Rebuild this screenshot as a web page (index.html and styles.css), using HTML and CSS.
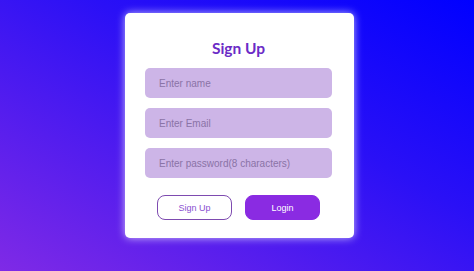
FILE: index.html
```html
<!DOCTYPE html>
<html>
<head>
<meta charset="utf-8">
<link rel="stylesheet" href="styles.css">
</head>
<body>
<div class="page">
  <form class="card">
    <h1 class="title">Sign Up</h1>
    <div class="fields">
      <input class="field" type="text" placeholder="Enter name">
      <input class="field" type="email" placeholder="Enter Email">
      <input class="field" type="password" placeholder="Enter password(8 characters)">
    </div>
    <div class="actions">
      <button type="button" class="btn btn-outline">Sign Up</button>
      <button type="button" class="btn btn-fill">Login</button>
    </div>
  </form>
</div>
</body>
</html>
```
FILE: styles.css
```css
html, body {
  margin: 0;
  padding: 0;
  height: 100%;
}
body {
  background: linear-gradient(to top right, #7f2ae6 0%, #2a10f6 60%, #0000ff 100%);
  font-family: "Liberation Sans", Arial, sans-serif;
  overflow: hidden;
}
.page {
  display: flex;
  justify-content: center;
  padding-top: 13px;
  padding-left: 5px;
}
.card {
  box-sizing: border-box;
  width: 229px;
  height: 225px;
  background: #fff;
  border-radius: 5px;
  box-shadow: 0 0 8px rgba(255, 255, 255, 0.7);
  padding: 24px 22px 0 20px;
  display: flex;
  flex-direction: column;
  align-items: center;
}
.title {
  margin: 0;
  font-family: Lato, "Open Sans", sans-serif;
  font-weight: 700;
  font-size: 15.5px;
  line-height: 22px;
  color: #6b2bc6;
}
.fields {
  margin-top: 9px;
  display: flex;
  flex-direction: column;
  gap: 10px;
  width: 187px;
}
.field {
  box-sizing: border-box;
  width: 187px;
  height: 30px;
  border: none;
  outline: none;
  border-radius: 5px;
  background: #cdb5e7;
  padding: 0 14px;
  font-family: "Liberation Sans", Arial, sans-serif;
  font-size: 10px;
  color: #5a4577;
}
.field::placeholder {
  color: #8a73a6;
}
.actions {
  margin-top: 17px;
  display: flex;
  gap: 13px;
  justify-content: center;
  width: 187px;
}
.btn {
  box-sizing: border-box;
  width: 75px;
  height: 25px;
  border-radius: 8px;
  font-family: "Liberation Sans", Arial, sans-serif;
  font-size: 9px;
  cursor: pointer;
  padding: 0;
}
.btn-outline {
  background: #fff;
  border: 1px solid #7e4bb0;
  color: #8a4fd0;
}
.btn-fill {
  background: #8a2be2;
  border: 1px solid #8a2be2;
  color: #fff;
}
```
